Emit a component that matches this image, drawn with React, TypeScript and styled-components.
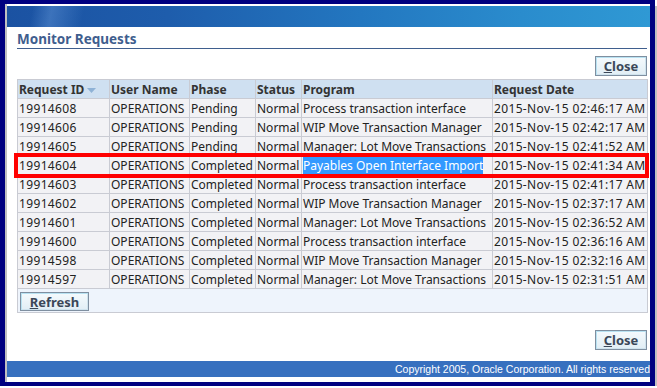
import React from "react";
import styled, { createGlobalStyle } from "styled-components";

const Global = createGlobalStyle`
  html, body { margin: 0; padding: 0; background: #ffffff; }
  body { font-family: "Noto Sans", "DejaVu Sans", sans-serif; }
`;

const Frame = styled.div`
  width: 655px;
  height: 386px;
  box-sizing: border-box;
  border-style: solid;
  border-color: #000080;
  border-width: 4px 5px 4px 5px;
  box-shadow: 4px 4px 0 -2px #c0c0c0;
`;

const Inner = styled.div`
  height: 100%;
  box-sizing: border-box;
  display: flex;
  flex-direction: column;
  background: #ffffff;
  border-left: 2px solid #c0c0c0;
  padding: 2px 0 5px 0;
`;

const Banner = styled.div`
  height: 21px;
  flex: none;
  background:
    linear-gradient(100deg, rgba(255,255,255,0) 0%, rgba(255,255,255,0) 4%, rgba(120,170,230,0.35) 7%, rgba(255,255,255,0) 12%, rgba(255,255,255,0) 100%),
    linear-gradient(90deg, #1b52a2 0%, #1e5dac 25%, #2377c0 55%, #2a8ccd 80%, #2f99d4 100%);
`;

const Content = styled.div`
  display: flex;
  flex-direction: column;
  padding: 0 3px 0 10px;
`;

const Title = styled.h1`
  margin: 4px 0 0 0;
  height: 17px;
  line-height: 17px;
  font-size: 13.5px;
  font-weight: bold;
  color: #3f5e8e;
  border-bottom: 1px solid #3f5e8e;
`;

const Actions = styled.div<{ $top: number }>`
  display: flex;
  justify-content: flex-end;
  margin-top: ${(p) => p.$top}px;
`;

const Button = styled.button<{ $w: number; $h: number }>`
  width: ${(p) => p.$w}px;
  height: ${(p) => p.$h}px;
  box-sizing: border-box;
  padding: 0;
  font-family: "Noto Sans", "DejaVu Sans", sans-serif;
  font-size: 13px;
  font-weight: bold;
  color: #3b4758;
  background: linear-gradient(#f5fafd, #e1eef5);
  border: 1px solid #7f8fa0;
  box-shadow: inset 1px 1px 0 #b8e2f2, inset -1px -1px 0 #cfe3ee;
  line-height: 16px;
  cursor: pointer;
  u { text-decoration: underline; }
`;

const TableWrap = styled.div`
  position: relative;
  margin-top: 3px;
`;

const Table = styled.table`
  width: 630px;
  table-layout: fixed;
  border-collapse: collapse;
  font-size: 12px;
`;

const HeadCell = styled.th`
  height: 17px;
  padding: 1px 1px 0 1px;
  line-height: 17px;
  text-align: left;
  font-weight: bold;
  color: #333333;
  background: #cfe0f1;
  border: 1px solid #c9cbd3;
  white-space: nowrap;
  overflow: hidden;
`;

const Cell = styled.td<{ $num?: boolean }>`
  height: 17px;
  padding: 1px 1px 0 1px;
  line-height: 17px;
  color: #222222;
  background: #f2f2f5;
  border: 1px solid #c9cbd3;
  white-space: nowrap;
  overflow: hidden;
  letter-spacing: ${(p) => (p.$num ? "0.35px" : "0")};
`;

const FooterCell = styled.td`
  height: 24px;
  padding: 3px 0 0 2px;
  box-sizing: border-box;
  vertical-align: top;
  background: #eef4fc;
  border: 1px solid #c9cbd3;
`;

const Selected = styled.span`
  background: #3399ff;
  color: #ffffff;
`;

const SortArrow = styled.svg`
  margin-left: 3px;
  vertical-align: 1px;
`;

const Highlight = styled.div`
  position: absolute;
  left: -3px;
  top: 74px;
  width: 635px;
  height: 25px;
  box-sizing: border-box;
  border: 4px solid #ff0000;
  pointer-events: none;
`;

const Footer = styled.div`
  margin-top: auto;
  height: 16px;
  flex: none;
  background: #3770bf;
  color: #ffffff;
  font-family: "Liberation Sans", Arial, sans-serif;
  font-size: 10.5px;
  line-height: 16px;
  display: flex;
  justify-content: flex-end;
  white-space: nowrap;
`;

type Row = { id: string; user: string; phase: string; status: string; program: string; date: string; sel?: boolean };

const rows: Row[] = [
  { id: "19914608", user: "OPERATIONS", phase: "Pending", status: "Normal", program: "Process transaction interface", date: "2015-Nov-15 02:46:17 AM" },
  { id: "19914606", user: "OPERATIONS", phase: "Pending", status: "Normal", program: "WIP Move Transaction Manager", date: "2015-Nov-15 02:42:17 AM" },
  { id: "19914605", user: "OPERATIONS", phase: "Pending", status: "Normal", program: "Manager: Lot Move Transactions", date: "2015-Nov-15 02:41:52 AM" },
  { id: "19914604", user: "OPERATIONS", phase: "Completed", status: "Normal", program: "Payables Open Interface Import", date: "2015-Nov-15 02:41:34 AM", sel: true },
  { id: "19914603", user: "OPERATIONS", phase: "Completed", status: "Normal", program: "Process transaction interface", date: "2015-Nov-15 02:41:17 AM" },
  { id: "19914602", user: "OPERATIONS", phase: "Completed", status: "Normal", program: "WIP Move Transaction Manager", date: "2015-Nov-15 02:37:17 AM" },
  { id: "19914601", user: "OPERATIONS", phase: "Completed", status: "Normal", program: "Manager: Lot Move Transactions", date: "2015-Nov-15 02:36:52 AM" },
  { id: "19914600", user: "OPERATIONS", phase: "Completed", status: "Normal", program: "Process transaction interface", date: "2015-Nov-15 02:36:16 AM" },
  { id: "19914598", user: "OPERATIONS", phase: "Completed", status: "Normal", program: "WIP Move Transaction Manager", date: "2015-Nov-15 02:32:16 AM" },
  { id: "19914597", user: "OPERATIONS", phase: "Completed", status: "Normal", program: "Manager: Lot Move Transactions", date: "2015-Nov-15 02:31:51 AM" },
];

const widths = [92, 80, 66, 46, 191, 155];

export default function App() {
  return (
    <>
      <Global />
      <Frame>
        <Inner>
          <Banner />
          <Content>
            <Title>Monitor Requests</Title>
            <Actions $top={7}>
              <Button $w={52} $h={20}><u>C</u>lose</Button>
            </Actions>
            <TableWrap>
              <Table>
                <colgroup>
                  {widths.map((w, i) => <col key={i} style={{ width: w }} />)}
                </colgroup>
                <thead>
                  <tr>
                    <HeadCell>
                      Request ID
                      <SortArrow width="9" height="5" viewBox="0 0 9 5">
                        <polygon points="0,0 9,0 4.5,5" fill="#8fb2d6" />
                      </SortArrow>
                    </HeadCell>
                    <HeadCell>User Name</HeadCell>
                    <HeadCell>Phase</HeadCell>
                    <HeadCell>Status</HeadCell>
                    <HeadCell>Program</HeadCell>
                    <HeadCell>Request Date</HeadCell>
                  </tr>
                </thead>
                <tbody>
                  {rows.map((r) => (
                    <tr key={r.id}>
                      <Cell $num>{r.id}</Cell>
                      <Cell>{r.user}</Cell>
                      <Cell>{r.phase}</Cell>
                      <Cell>{r.status}</Cell>
                      <Cell>{r.sel ? <Selected>{r.program}</Selected> : r.program}</Cell>
                      <Cell $num>{r.date}</Cell>
                    </tr>
                  ))}
                  <tr>
                    <FooterCell colSpan={6}>
                      <Button $w={69} $h={19}><u>R</u>efresh</Button>
                    </FooterCell>
                  </tr>
                </tbody>
              </Table>
              <Highlight />
            </TableWrap>
            <Actions $top={17}>
              <Button $w={52} $h={20}><u>C</u>lose</Button>
            </Actions>
          </Content>
          <Footer>Copyright 2005, Oracle Corporation. All rights reserved</Footer>
        </Inner>
      </Frame>
    </>
  );
}
